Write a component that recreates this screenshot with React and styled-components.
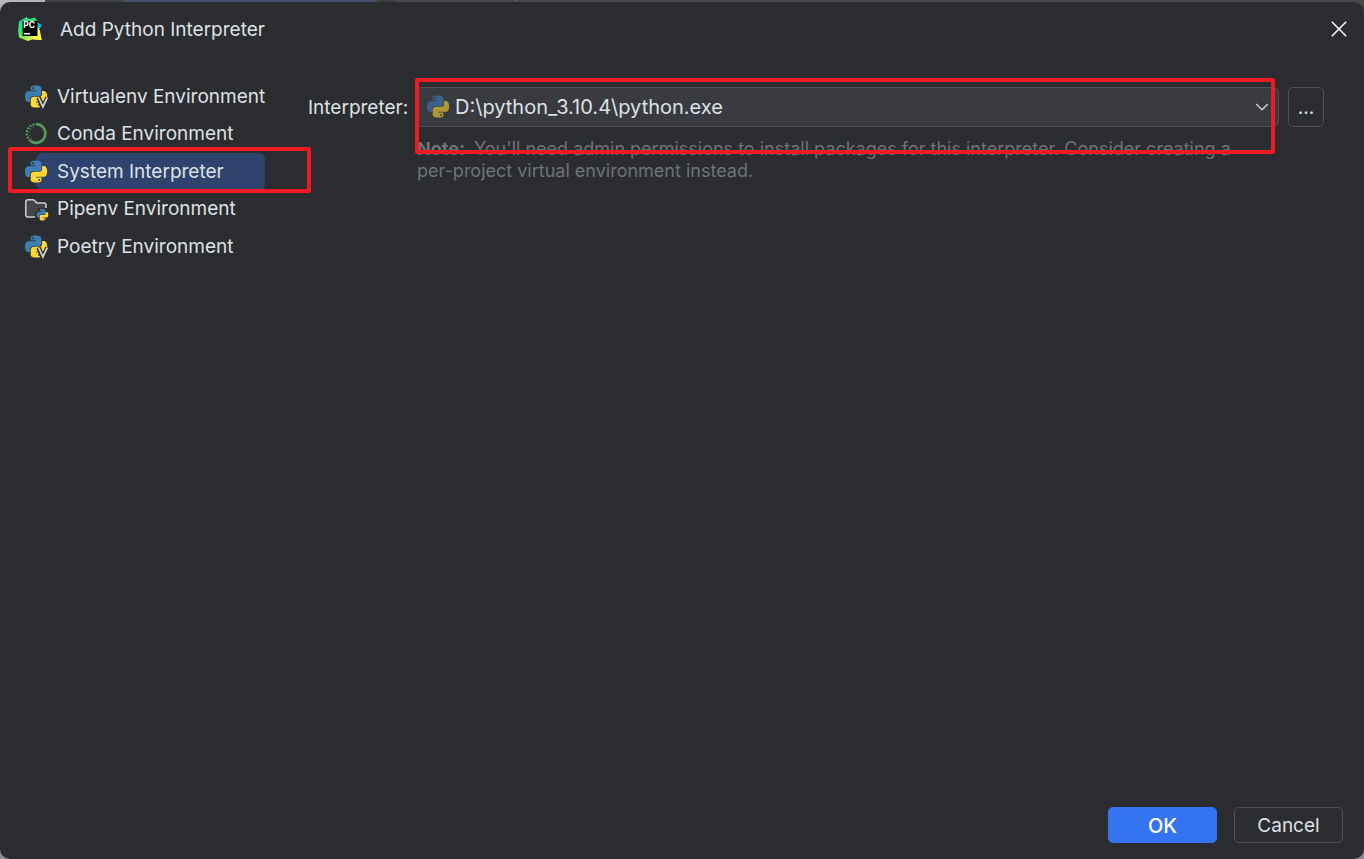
import React, { useState } from "react";
import styled, { createGlobalStyle } from "styled-components";

const GlobalStyle = createGlobalStyle`
  * {
    box-sizing: border-box;
  }

  body {
    margin: 0;
    background: #8b8c8f;
    color: #dfe1e5;
    font: 19px/24px Inter, "Liberation Sans", sans-serif;
  }

  button,
  select {
    margin: 0;
    color: inherit;
    font: inherit;
  }

  svg {
    flex: none;
  }
`;

const Window = styled.div`
  min-height: 100vh;
  display: flex;
  flex-direction: column;
`;

const Backdrop = styled.div`
  height: 2px;
  margin-bottom: -12px;
  padding-bottom: 12px;
  box-sizing: content-box;
  background: linear-gradient(
    to right,
    #b4b6b8 45px,
    #444548 45px 124px,
    #46526c 124px 377px,
    #3d3f41 377px 395px,
    #46484a 395px 515px,
    #5a5c5f 515px 517px,
    #46484a 517px
  );
`;

const Dialog = styled.main`
  position: relative;
  flex: 1;
  display: flex;
  flex-direction: column;
  background: #2b2d30;
  border-radius: 10px;
`;

const TitleBar = styled.header`
  display: flex;
  align-items: center;
  height: 54px;
  padding: 0 17px 0 18px;
`;

const Title = styled.h1`
  flex: 1;
  margin: 0 0 0 18px;
  padding-top: 2px;
  font-size: 19px;
  font-weight: 400;
`;

const CloseButton = styled.button`
  display: flex;
  padding: 0;
  border: 0;
  background: none;
`;

const Body = styled.div`
  flex: 1;
  display: flex;
  align-items: flex-start;
  padding: 22px 40px 0 25px;
`;

const EnvList = styled.ul`
  flex: none;
  display: flex;
  flex-direction: column;
  justify-content: space-between;
  width: 240px;
  min-height: 187px;
  margin: 0;
  padding: 0;
  list-style: none;
`;

const EnvItem = styled.li`
  position: relative;
`;

const EnvButton = styled.button`
  position: relative;
  display: flex;
  align-items: center;
  gap: 8px;
  width: 100%;
  height: 37px;
  padding: 0;
  border: 0;
  background: none;
  white-space: nowrap;

  &::before {
    content: "";
    position: absolute;
    inset: 0 0 0 11px;
    border-radius: 6px;
    background: ${(props) => (props.$selected ? "#2e436e" : "transparent")};
  }

  > * {
    position: relative;
  }
`;

const Highlight = styled.div`
  position: absolute;
  inset: ${(props) => props.$inset};
  border: 4px solid #ed1c24;
  border-radius: 2px;
  pointer-events: none;
`;

const Form = styled.form`
  flex: 1;
  display: flex;
  align-items: flex-start;
  margin-left: 43px;
  padding-top: 9px;
`;

const Label = styled.label`
  width: 109px;
  line-height: 42px;
`;

const Field = styled.div`
  position: relative;
  flex: 1;
`;

const SelectBox = styled.div`
  position: relative;
  display: flex;
  align-items: center;

  > svg {
    position: absolute;
    pointer-events: none;
  }

  > svg:first-child {
    left: 10px;
    opacity: 0.6;
  }

  > svg:last-child {
    right: 10px;
  }
`;

const Select = styled.select`
  width: 100%;
  height: 40px;
  padding: 0 36px 0 37px;
  appearance: none;
  border: 1px solid #4e5157;
  border-radius: 5px;
  background: #393b40;
  font-size: 20px;
`;

const Note = styled.p`
  max-width: 840px;
  margin: 11px 0 0;
  color: #6f737a;
  font-size: 18px;
  line-height: 22px;

  b {
    margin-right: 4px;
  }
`;

const Button = styled.button`
  width: ${(props) => props.$width};
  height: ${(props) => props.$height || "36px"};
  padding: 2px 0 0;
  border: 1px solid ${(props) => (props.$primary ? "#3574f0" : "#4e5157")};
  border-radius: 5px;
  background: ${(props) => (props.$primary ? "#3574f0" : "#2b2d30")};
  color: ${(props) => (props.$primary ? "#ffffff" : "#dfe1e5")};
  font-size: ${(props) => (props.$primary ? "20px" : "19px")};
  font-weight: ${(props) => (props.$primary ? 500 : 400)};
`;

const BrowseButton = styled(Button)`
  margin-left: 9px;
`;

const Footer = styled.footer`
  display: flex;
  justify-content: flex-end;
  gap: 17px;
  padding: 16px 21px;
`;

const SNAKE =
  "M14.25.18l.9.2.73.26.59.3.45.32.34.34.25.34.16.33.1.3.04.26.02.2-.01.13V8.5l-.05.63-.13.55-.21.46-.26.38-.3.31-.33.25-.35.19-.35.14-.33.1-.3.07-.26.04-.21.02H8.77l-.69.05-.59.14-.5.22-.41.27-.33.32-.27.35-.2.36-.15.37-.1.35-.07.32-.04.27-.02.21v3.06H3.17l-.21-.03-.28-.07-.32-.12-.35-.18-.36-.26-.36-.36-.35-.46-.32-.59-.28-.73-.21-.88-.14-1.05-.05-1.23.06-1.22.16-1.04.24-.87.32-.71.36-.57.4-.44.42-.33.42-.24.4-.16.36-.1.32-.05.24-.01h.16l.06.01h8.16v-.83H6.18l-.01-2.75-.02-.37.05-.34.11-.31.17-.28.25-.26.31-.23.38-.2.44-.18.51-.15.58-.12.64-.1.71-.06.77-.04.84-.02 1.27.05zm-6.3 1.98l-.23.33-.08.41.08.41.23.34.33.22.41.09.41-.09.33-.22.23-.34.08-.41-.08-.41-.23-.33-.33-.22-.41-.09-.41.09z";

const Snakes = () => (
  <>
    <path d={SNAKE} fill="#3e7fb3" />
    <path d={SNAKE} fill="#fdd835" transform="rotate(180 12 12)" />
  </>
);

const PythonIcon = () => (
  <svg width="24" height="24" viewBox="0 0 24 24">
    <g transform="translate(0 .5) scale(.92)">
      <Snakes />
    </g>
  </svg>
);

const VirtualenvIcon = () => (
  <svg width="24" height="24" viewBox="0 0 24 24">
    <g transform="translate(0 .5) scale(.92)">
      <Snakes />
    </g>
    <path d="M13.5 12.5l4.4 10 4.6-10" fill="none" stroke="#2b2d30" strokeWidth="4.6" />
    <path d="M13.6 12.5l4.3 9.4 4.4-9.4" fill="none" stroke="#ced0d6" strokeWidth="1.8" />
  </svg>
);

const CondaIcon = () => (
  <svg width="24" height="24" viewBox="0 0 24 24" fill="none" stroke="#57965c">
    <path d="M11 2.2a9.3 9.3 0 1 1-5.6 16.7" strokeWidth="2.7" />
    <path d="M5.4 18.9A9.3 9.3 0 0 1 11 2.2" strokeWidth="2.4" strokeDasharray="2 1.2" />
    <path d="M6.8 16.9A7.4 7.4 0 0 1 9 4.5" strokeWidth="1" strokeDasharray="1.5 1.8" />
  </svg>
);

const PipenvIcon = () => (
  <svg width="24" height="24" viewBox="0 0 24 24">
    <path
      d="M.8 4.8a2 2 0 0 1 2-2h5.1c.5 0 1 .2 1.3.5l2.6 2.6h7.2a2 2 0 0 1 2 2v10a2 2 0 0 1-2 2H2.8a2 2 0 0 1-2-2z"
      fill="#43454a"
      stroke="#ced0d6"
      strokeWidth="1.5"
    />
    <path d="M10 15h3v-4h11v13H10z" fill="#2b2d30" />
    <g transform="translate(11.7 12) scale(.48)">
      <Snakes />
    </g>
  </svg>
);

const PyCharmIcon = () => (
  <svg width="24" height="24" viewBox="0 0 24 24">
    <defs>
      <linearGradient id="green" x1="0" y1="0" x2="0.6" y2="1">
        <stop offset="0" stopColor="#21d789" />
        <stop offset="0.5" stopColor="#35e46c" />
        <stop offset="1" stopColor="#fcf84a" />
      </linearGradient>
    </defs>
    <path d="M19 5l4.7 3.2-3.4 6-3-5z" fill="#07c3f2" />
    <path d="M1 4.5L8.5 0l2.6 2L17 .5 19.5 5v7L23.7 23l-9-.8-4.5 1.8L1 20.5 0 14z" fill="url(#green)" />
    <path d="M20 10l2 4 1.7 9-9-.8L18 16z" fill="#fcf84a" />
    <path d="M4.5 4h15v15h-15z" fill="#000" />
    <text x="5.3" y="11.4" fill="#fff" fontSize="8.5" fontWeight="700" fontFamily="Inter, sans-serif">
      PC
    </text>
    <path d="M6 16h6v1.5H6z" fill="#fff" />
  </svg>
);

const CloseIcon = () => (
  <svg width="16" height="16" viewBox="0 0 16 16">
    <path d="M.8.8l14.4 14.4M15.2.8L.8 15.2" stroke="#fff" strokeWidth="1.5" />
  </svg>
);

const ChevronIcon = () => (
  <svg width="14" height="8" viewBox="0 0 14 8" fill="none">
    <path d="M1.2 1L7 6.8 12.8 1" stroke="#ced0d6" strokeWidth="1.5" />
  </svg>
);

const environments = [
  { name: "Virtualenv Environment", Icon: VirtualenvIcon },
  { name: "Conda Environment", Icon: CondaIcon },
  { name: "System Interpreter", Icon: PythonIcon, marked: true },
  { name: "Pipenv Environment", Icon: PipenvIcon },
  { name: "Poetry Environment", Icon: VirtualenvIcon },
];

const App = () => {
  const [selected, setSelected] = useState("System Interpreter");

  return (
    <Window>
      <GlobalStyle />
      <Backdrop />
      <Dialog>
        <TitleBar>
          <PyCharmIcon />
          <Title>Add Python Interpreter</Title>
          <CloseButton aria-label="Close">
            <CloseIcon />
          </CloseButton>
        </TitleBar>

        <Body>
          <EnvList>
            {environments.map(({ name, Icon, marked }) => (
              <EnvItem key={name}>
                <EnvButton $selected={name === selected} onClick={() => setSelected(name)}>
                  <Icon />
                  <span>{name}</span>
                </EnvButton>
                {marked && <Highlight $inset="-6px -46px -3px -17px" />}
              </EnvItem>
            ))}
          </EnvList>

          <Form onSubmit={(e) => e.preventDefault()}>
            <Label htmlFor="interpreter">Interpreter:</Label>
            <Field>
              <SelectBox>
                <PythonIcon />
                <Select id="interpreter">
                  <option>D:\python_3.10.4\python.exe</option>
                </Select>
                <ChevronIcon />
              </SelectBox>
              <Note>
                <b>Note:</b> You'll need admin permissions to install packages for this
                interpreter. Consider creating a per-project virtual environment instead.
              </Note>
              <Highlight $inset="-9px 4px 28px -2px" />
            </Field>
            <BrowseButton type="button" $width="36px" $height="40px" aria-label="Browse">
              ...
            </BrowseButton>
          </Form>
        </Body>

        <Footer>
          <Button $primary $width="109px">
            OK
          </Button>
          <Button $width="109px">Cancel</Button>
        </Footer>
      </Dialog>
    </Window>
  );
};

export default App;
